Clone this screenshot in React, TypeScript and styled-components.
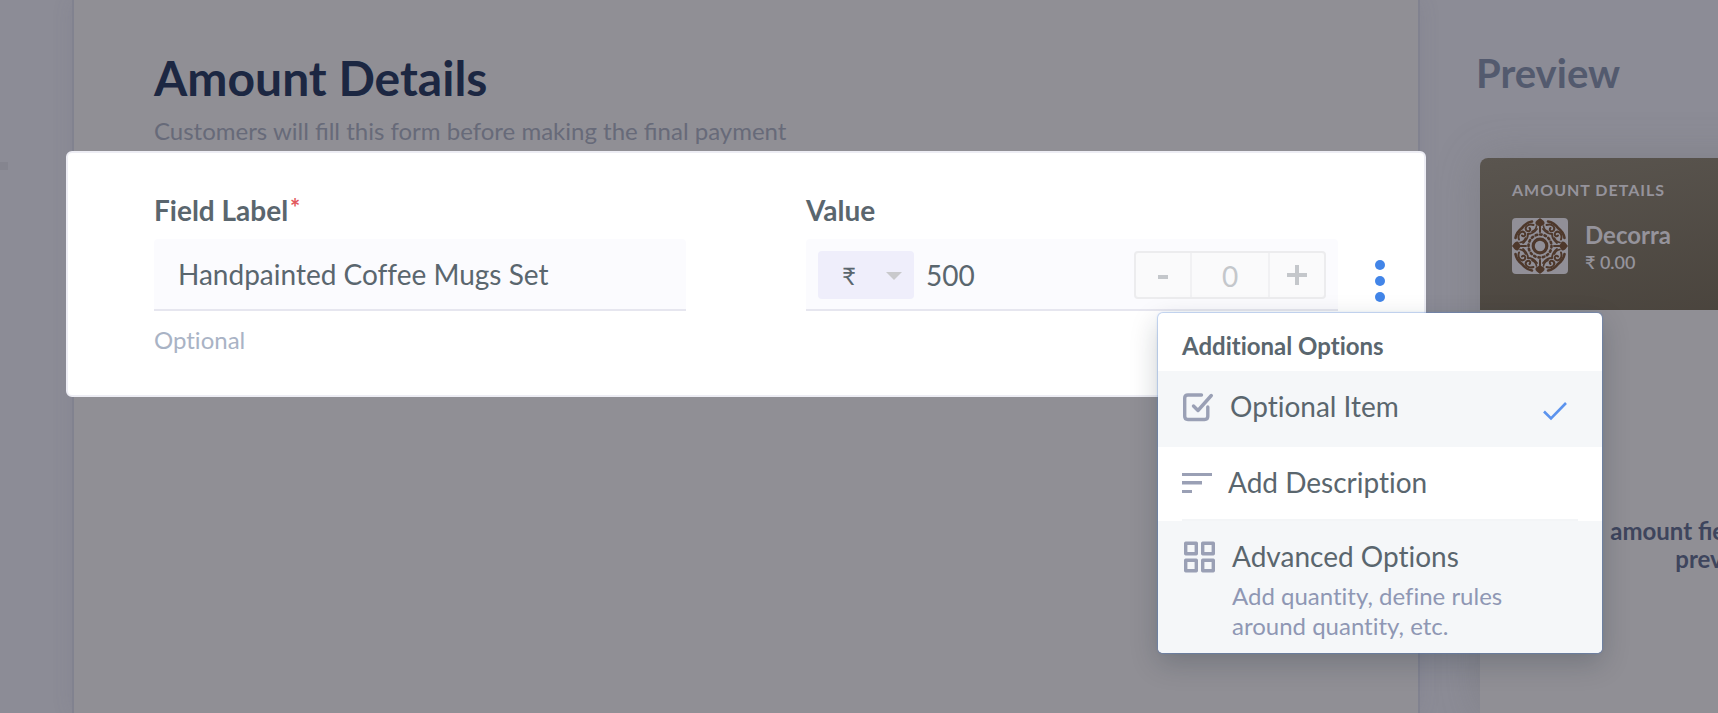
import React from "react";
import styled, { createGlobalStyle } from "styled-components";

const GlobalStyle = createGlobalStyle`
  *, *::before, *::after { box-sizing: border-box; }
  body {
    margin: 0;
    background: #8c8c96;
    font-family: Lato, "Liberation Sans", sans-serif;
    font-variant-ligatures: none;
    color: #5a666e;
    overflow: hidden;
  }
  button, input, select { font: inherit; color: inherit; margin: 0; }
  h1, h2, h3, p { margin: 0; }
`;

const Page = styled.div`
  display: grid;
  grid-template-columns: 72px minmax(0, 1fr) 298px;
  min-height: 100vh;
`;

const Rail = styled.aside`
  padding-top: 162px;
`;

const RailMark = styled.div`
  width: 8px;
  height: 8px;
  background: #85858f;
`;

const Editor = styled.main`
  position: relative;
  z-index: 1;
  padding: 50px 0 0;
  background: #908f95;
  border: 2px solid #81828f;
  border-width: 0 2px;
  box-shadow: 0 0 20px rgba(90, 92, 125, 0.12);
`;

const Heading = styled.header`
  padding: 0 80px;
`;

const Title = styled.h1`
  font-size: 48px;
  line-height: 56px;
  font-weight: 700;
  color: #1c2742;
`;

const Subtitle = styled.p`
  margin-top: 10px;
  font-size: 24px;
  line-height: 30px;
  font-variant-ligatures: normal;
  color: #676a79;
`;

const FieldCard = styled.form`
  display: flex;
  margin: 5px -8px 0;
  padding: 40px 22px 40px 86px;
  background: #fff;
  border: 2px solid #ededf4;
  border-radius: 6px;
`;

const Fields = styled.div`
  flex: 1;
  min-width: 0;
  display: grid;
  grid-template-columns: repeat(2, minmax(0, 1fr));
  column-gap: 120px;
`;

const Field = styled.div`
  display: flex;
  flex-direction: column;
`;

const Label = styled.label`
  font-size: 28px;
  line-height: 34px;
  font-weight: 700;
  margin-bottom: 12px;
`;

const Required = styled.span`
  margin-left: 2px;
  color: #e2585d;
  font-size: 24px;
  line-height: 24px;
  vertical-align: 4px;
`;

const TextInput = styled.input`
  width: 100%;
  height: 72px;
  padding: 0 24px;
  border: 0;
  border-bottom: 2px solid #e6e6ef;
  border-radius: 4px 4px 0 0;
  background: #fbfbfe;
  font-size: 28px;
  outline: none;
`;

const Hint = styled.p`
  margin-top: 14px;
  font-size: 24px;
  line-height: 30px;
  color: #a9b3c5;
`;

const ValueBox = styled.div`
  display: flex;
  align-items: center;
  gap: 12px;
  height: 72px;
  padding: 2px 12px 0;
  border-bottom: 2px solid #e6e6ef;
  border-radius: 4px 4px 0 0;
  background: #fbfbfe;
  font-size: 28px;
`;

const Currency = styled.div`
  display: grid;
  align-items: center;
  width: 96px;
  height: 48px;
  border-radius: 4px;
  background: #efeefb;

  > * { grid-area: 1 / 1; }
`;

const CurrencySelect = styled.select`
  width: 100%;
  height: 48px;
  padding: 0 24px;
  border: 0;
  background: transparent;
  appearance: none;
  font-size: 24px;
  outline: none;
`;

const Caret = styled.span`
  justify-self: end;
  margin: 2px 12px 0 0;
  border: 8px solid transparent;
  border-top-color: #c9c9cc;
  border-bottom: 0;
  pointer-events: none;
`;

const AmountInput = styled.input`
  flex: 1;
  min-width: 0;
  padding: 0;
  border: 0;
  background: transparent;
  outline: none;
`;

const Stepper = styled.div`
  display: grid;
  grid-template-columns: 54px 80px 54px;
  height: 48px;
  border: 2px solid #ececee;
  border-radius: 4px;
  background: #fafafb;
  color: #c4c7cb;
`;

const StepButton = styled.button`
  display: grid;
  place-items: center;
  padding: 0;
  border: 0;
  background: transparent;
`;

const StepValue = styled.input`
  width: 100%;
  min-width: 0;
  padding: 2px 0 0;
  border: 0 solid #f1f1f3;
  border-width: 0 2px;
  background: transparent;
  text-align: center;
  outline: none;
`;

const MoreWrap = styled.div`
  position: relative;
  align-self: flex-start;
  margin: 62px 0 0 20px;
`;

const MoreButton = styled.button`
  display: flex;
  flex-direction: column;
  align-items: center;
  gap: 6px;
  width: 44px;
  padding: 5px 0;
  border: 0;
  background: transparent;
`;

const Dot = styled.span`
  width: 10px;
  height: 10px;
  border-radius: 50%;
  background: #4285e8;
`;

const Menu = styled.div`
  position: absolute;
  top: 58px;
  right: -200px;
  width: 444px;
  border-radius: 5px;
  background: #fff;
  box-shadow: 0 0 0 1px rgba(70, 125, 220, 0.2), 0 0 2px 1px rgba(70, 125, 220, 0.15),
    0 10px 28px rgba(20, 30, 45, 0.22);
`;

const MenuTitle = styled.h2`
  padding: 18px 24px 10px;
  font-size: 24px;
  line-height: 30px;
  font-weight: 700;
`;

const MenuItem = styled.button<{ $tinted?: boolean; $tail: number }>`
  display: flex;
  align-items: flex-start;
  gap: 16px;
  width: 100%;
  padding: 18px 24px ${(p) => p.$tail}px;
  border: 0;
  border-radius: 0 0 5px 5px;
  background: ${(p) => (p.$tinted ? "#f5f7f9" : "#fff")};
  text-align: left;

  &:not(:last-child) { border-radius: 0; }
  > svg { flex: none; }
`;

const MenuDivider = styled.hr`
  height: 2px;
  margin: 0 24px;
  border: 0;
  background: #f3f5f7;
`;

const ItemText = styled.span`
  flex: 1;
  font-size: 28px;
  line-height: 34px;
`;

const ItemNote = styled.span`
  display: block;
  max-width: 290px;
  margin-top: 8px;
  font-size: 24px;
  line-height: 30px;
  color: #8f97b4;
`;

const Preview = styled.aside`
  min-width: 0;
  display: flex;
  flex-direction: column;
  padding: 49px 0 0 56px;
  overflow: hidden;
`;

const PreviewTitle = styled.h2`
  font-size: 40px;
  line-height: 48px;
  font-weight: 700;
  color: #535a6e;
`;

const PreviewCard = styled.section`
  flex: 1;
  display: flex;
  flex-direction: column;
  width: 476px;
  margin: 61px 0 0 4px;
  border-radius: 8px 8px 0 0;
  background: #908f95;
  box-shadow: 0 0 44px rgba(100, 98, 100, 0.3);
`;

const PreviewHead = styled.header`
  height: 152px;
  padding: 22px 32px 0;
  border-radius: 8px 8px 0 0;
  background: linear-gradient(170deg, #5a554f, #47413a);
  color: #95939b;
`;

const Overline = styled.p`
  font-size: 16px;
  line-height: 20px;
  font-weight: 700;
  letter-spacing: 1px;
`;

const Merchant = styled.div`
  display: flex;
  gap: 17px;
  margin-top: 18px;
`;

const MerchantLogo = styled.svg`
  width: 56px;
  height: 56px;
  border-radius: 4px;
  background: #918f97;
`;

const MerchantName = styled.h3`
  margin-top: 3px;
  font-size: 24px;
  line-height: 28px;
  font-weight: 700;
`;

const MerchantTotal = styled.p`
  font-size: 18px;
  line-height: 26px;
  font-weight: 600;
`;

const EmptyNote = styled.p`
  align-self: center;
  width: 260px;
  margin-top: 207px;
  font-size: 24px;
  line-height: 28px;
  font-weight: 700;
  font-variant-ligatures: normal;
  text-align: center;
  color: #3e455d;
`;

function Ornament() {
  return (
    <MerchantLogo viewBox="-28 -28 56 56" role="img" aria-label="Decorra">
      <g fill="none" stroke="#4e382b" strokeLinecap="round">
        <circle r="6.800" strokeWidth="3.200" />
        <circle r="11.500" strokeWidth="2.600" strokeDasharray="1.500 3" />
        {[0, 90, 180, 270].map((a) => (
          <g key={a} transform={`rotate(${a})`}>
            <path d="M0-28C2-26 5-25 4.500-22.500 4-20.500 1-21 0-18-1-21-4-20.500-4.500-22.500-5-25-2-26 0-28Z" fill="#4e382b" stroke="none" />
            <path d="M0-19V-14" strokeWidth="2" />
            {[1, -1].map((s) => (
              <g key={s} transform={`scale(${s} 1)`} strokeWidth="1.600">
                <path d="M8-24.500Q14-23.500 18-18" strokeWidth="2.600" />
                <path d="M6.500-21C12-23 16-18.500 13.500-15.500 11-13.500 8.500-16 10.500-18" strokeWidth="2" />
                <path d="M3-17C5-14.500 7-12 12-12" strokeWidth="1.800" />
                <path d="M3.500-20Q4-16 8-14.500" />
              </g>
            ))}
          </g>
        ))}
      </g>
    </MerchantLogo>
  );
}

function CheckSquareIcon() {
  return (
    <svg width="32" height="34" viewBox="0 0 32 34" fill="none" stroke="#9aa0b5" strokeWidth="3.400" strokeLinecap="round" strokeLinejoin="round" aria-hidden="true">
      <path d="M19.500 6H6Q2.700 6 2.700 9V27.300Q2.700 30.500 6 30.500H22.600Q25.800 30.500 25.800 27.300V18" />
      <path d="M11.500 17L16 21.500 29.300 6.500" />
    </svg>
  );
}

function LinesIcon() {
  return (
    <svg width="30" height="34" viewBox="0 0 30 34" fill="#9aa0b5" aria-hidden="true">
      <path d="M0 8H30V11H0ZM0 16H20V19.500H0ZM0 25H10V28H0Z" />
    </svg>
  );
}

function GridIcon() {
  return (
    <svg width="34" height="34" viewBox="0 0 34 34" fill="none" stroke="#9aa0b5" strokeWidth="3.400" strokeLinejoin="round" aria-hidden="true">
      <rect x="3.700" y="4.200" width="10.600" height="10.600" />
      <rect x="20.700" y="4.200" width="10.600" height="10.600" />
      <rect x="3.700" y="21.200" width="10.600" height="10.600" />
      <rect x="20.700" y="21.200" width="10.600" height="10.600" />
    </svg>
  );
}

function TickIcon() {
  return (
    <svg width="35" height="34" viewBox="0 0 35 34" fill="none" stroke="#5b93ee" strokeWidth="2.600" aria-hidden="true">
      <path d="M1 22.500L8 29.500 23 14" />
    </svg>
  );
}

export default function App() {
  return (
    <>
      <GlobalStyle />
      <Page>
        <Rail>
          <RailMark />
        </Rail>
        <Editor>
          <Heading>
            <Title>Amount Details</Title>
            <Subtitle>Customers will fill this form before making the final payment</Subtitle>
          </Heading>
          <FieldCard onSubmit={(e) => e.preventDefault()}>
            <Fields>
              <Field>
                <Label htmlFor="field-label">
                  Field Label<Required>*</Required>
                </Label>
                <TextInput id="field-label" defaultValue="Handpainted Coffee Mugs Set" />
                <Hint>Optional</Hint>
              </Field>
              <Field>
                <Label htmlFor="amount">Value</Label>
                <ValueBox>
                  <Currency>
                    <CurrencySelect aria-label="Currency" defaultValue="inr">
                      <option value="inr">₹</option>
                    </CurrencySelect>
                    <Caret />
                  </Currency>
                  <AmountInput id="amount" defaultValue="500" />
                  <Stepper>
                    <StepButton type="button" aria-label="Decrease quantity">
                      <svg width="20" height="20" stroke="currentColor" strokeWidth="4" aria-hidden="true">
                        <path d="M5 12H15" />
                      </svg>
                    </StepButton>
                    <StepValue aria-label="Quantity" defaultValue="0" />
                    <StepButton type="button" aria-label="Increase quantity">
                      <svg width="20" height="20" stroke="currentColor" strokeWidth="4" aria-hidden="true">
                        <path d="M0 10H20M10 0V20" />
                      </svg>
                    </StepButton>
                  </Stepper>
                </ValueBox>
              </Field>
            </Fields>
            <MoreWrap>
              <MoreButton type="button" aria-label="More options" aria-expanded="true">
                <Dot />
                <Dot />
                <Dot />
              </MoreButton>
              <Menu>
                <MenuTitle>Additional Options</MenuTitle>
                <MenuItem type="button" $tinted $tail={24}>
                  <CheckSquareIcon />
                  <ItemText>Optional Item</ItemText>
                  <TickIcon />
                </MenuItem>
                <MenuItem type="button" $tail={20}>
                  <LinesIcon />
                  <ItemText>Add Description</ItemText>
                </MenuItem>
                <MenuDivider />
                <MenuItem type="button" $tinted $tail={12}>
                  <GridIcon />
                  <ItemText>
                    Advanced Options
                    <ItemNote>Add quantity, define rules around quantity, etc.</ItemNote>
                  </ItemText>
                </MenuItem>
              </Menu>
            </MoreWrap>
          </FieldCard>
        </Editor>
        <Preview>
          <PreviewTitle>Preview</PreviewTitle>
          <PreviewCard>
            <PreviewHead>
              <Overline>AMOUNT DETAILS</Overline>
              <Merchant>
                <Ornament />
                <div>
                  <MerchantName>Decorra</MerchantName>
                  <MerchantTotal>₹ 0.00</MerchantTotal>
                </div>
              </Merchant>
            </PreviewHead>
            <EmptyNote>
              amount fields to see
              <br />
              preview
            </EmptyNote>
          </PreviewCard>
        </Preview>
      </Page>
    </>
  );
}
